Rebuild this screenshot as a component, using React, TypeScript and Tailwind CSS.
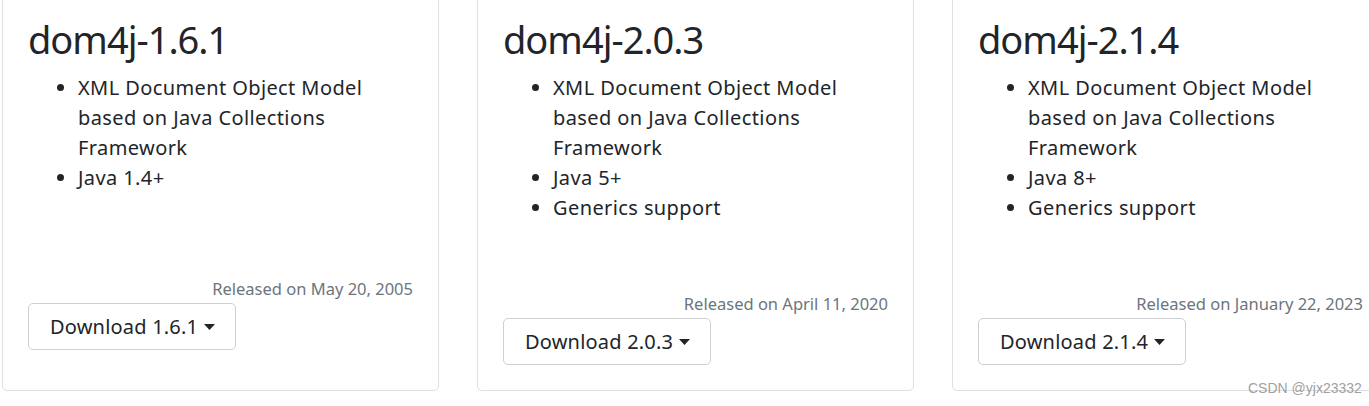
import React from "react";

type Card = {
  version: string;
  items: string[];
  released: string;
};

const cards: Card[] = [
  {
    version: "1.6.1",
    items: ["XML Document Object Model based on Java Collections Framework", "Java 1.4+"],
    released: "Released on May 20, 2005",
  },
  {
    version: "2.0.3",
    items: ["XML Document Object Model based on Java Collections Framework", "Java 5+", "Generics support"],
    released: "Released on April 11, 2020",
  },
  {
    version: "2.1.4",
    items: ["XML Document Object Model based on Java Collections Framework", "Java 8+", "Generics support"],
    released: "Released on January 22, 2023",
  },
];

function CardView({ c, first }: { c: Card; first: boolean }) {
  return (
    <div className="w-[437px] h-[402px] shrink-0 border border-[#dfdfdf] rounded-[5px] bg-white flex flex-col px-[25px] pt-[25px]">
      <h2 className="text-[38px] leading-[48px] tracking-[-1px] font-normal text-[#212529] mb-[10px]">dom4j-{c.version}</h2>
      <ul className="list-disc pl-[50px] text-[20px] leading-[30px] tracking-[0.4px] text-[#212529] pr-[6px]">
        {c.items.map((it) => (
          <li key={it}>{it}</li>
        ))}
      </ul>
      <div className={first ? "mt-[84px]" : "mt-[69px]"}>
        <p className="text-right text-[16.5px] leading-[24px] text-[#6c757d]">{c.released}</p>
        <button className="mt-[2px] h-[47px] pl-[21px] pr-[20px] border border-[#cfcfcf] rounded-[5px] bg-white text-[20px] tracking-[0.2px] text-[#212529] flex items-center gap-[6px]">
          <span>Download {c.version}</span>
          <svg width="11" height="6" viewBox="0 0 11 6">
            <polygon points="0,0 11,0 5.5,6" fill="#212529" />
          </svg>
        </button>
      </div>
    </div>
  );
}

export default function App() {
  return (
    <div
      className="relative w-[1369px] h-[406px] overflow-hidden bg-white"
      style={{ fontFamily: '"Noto Sans", sans-serif' }}
    >
      <div className="flex gap-[38px] pl-[2px] mt-[-11px]">
        {cards.map((c, i) => (
          <CardView key={c.version} c={c} first={i === 0} />
        ))}
      </div>
      <div
        className="absolute left-[1248px] top-[379px] text-[14px] leading-[18px] text-[#a0a0a0]"
        style={{ fontFamily: '"Liberation Sans", sans-serif' }}
      >
        CSDN @yjx23332
      </div>
    </div>
  );
}
